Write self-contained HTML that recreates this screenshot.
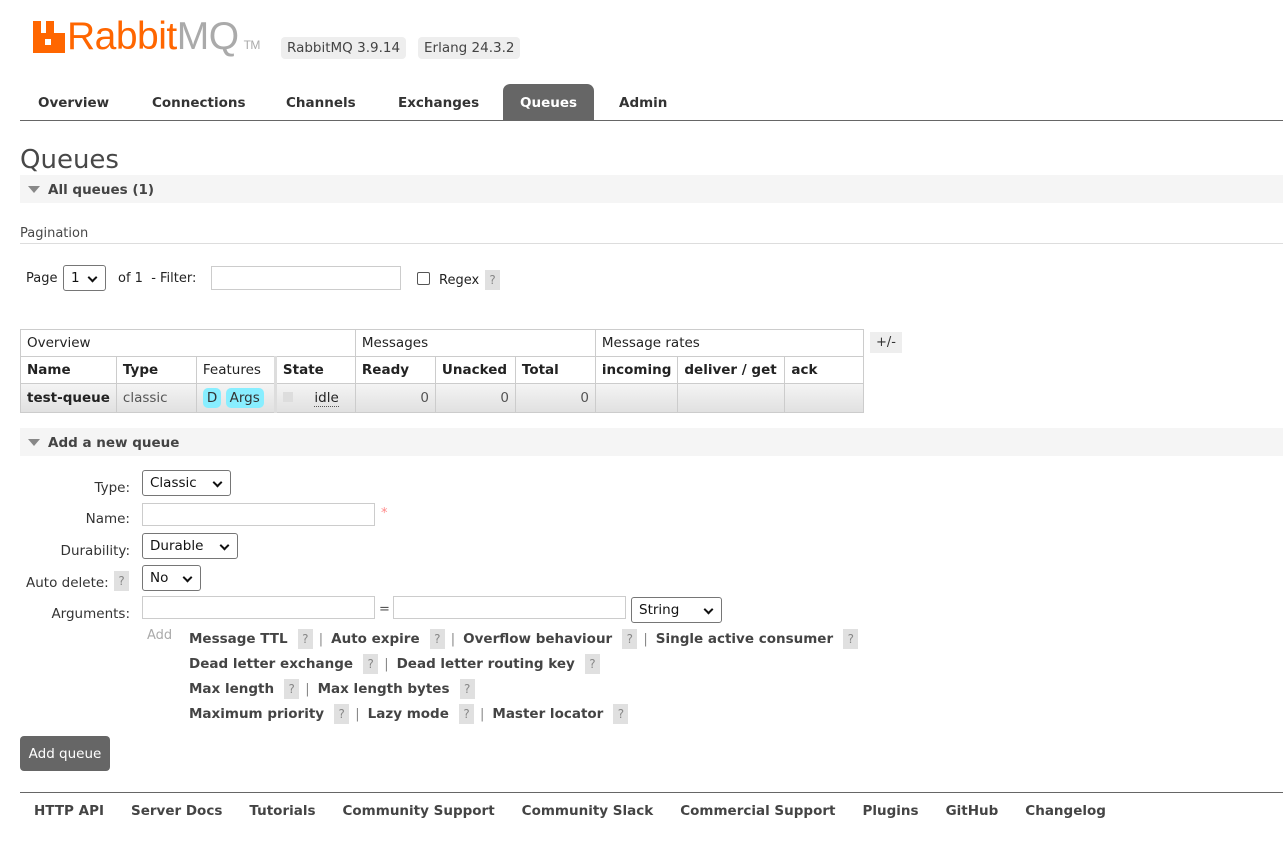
<!DOCTYPE html>
<html><head><meta charset="utf-8"><style>
*{margin:0;padding:0;box-sizing:border-box}
body{width:1283px;height:855px;background:#fff;font-family:"DejaVu Sans","Liberation Sans",sans-serif;font-size:13px;color:#484848;position:relative;overflow:hidden}
.a{position:absolute;white-space:nowrap}
.b{font-weight:bold}
.pill{background:#eee;border-radius:4px;padding:3px 6px;color:#444;font-size:13.5px}
.nav{font-weight:bold;font-size:13.5px;color:#333;top:95px}
.q{background:#e0e0e0;color:#888;width:15px;height:20px;text-align:center;line-height:20px;font-size:12px}
.sel{border:1px solid #767676;border-radius:3px;height:26px;background:#fff;color:#111;padding:4px 7px;font-size:13.5px}
.sel:after{content:"";position:absolute;right:9px;top:8px;width:5px;height:5px;border-right:2px solid #111;border-bottom:2px solid #111;transform:rotate(45deg)}
.inp{border:1px solid #ccc;height:23px;background:#fff}
.lbl{text-align:right;color:#333;font-size:13.5px}
.lnk{font-weight:bold;color:#444;font-size:13.5px}
.sep{color:#888;margin-right:8px;margin-left:2px}
td{border:1px solid #ccc;padding:0 6px;height:27px;font-size:13.5px;color:#222}
.tri{display:inline-block;width:0;height:0;border-left:6px solid transparent;border-right:6px solid transparent;border-top:7px solid #888;margin-right:8px;vertical-align:1px}
.qq{display:inline-block;margin:0 4px 0 6px}
</style></head><body>
<svg class="a" style="left:33px;top:21px" width="32" height="32" viewBox="0 0 32 32"><path d="M0 0h8v12h5V0h8v32H0z M21 12h11v20H21z" fill="#f60"/><rect x="12" y="18" width="6" height="6" fill="#fff"/></svg>
<div class="a" style="left:67px;top:15px;font-family:'Liberation Sans',sans-serif;font-size:39px;color:#f60;letter-spacing:-0.5px">Rabbit<span style="color:#aaa">MQ</span><span style="font-size:12px;color:#aaa;margin-left:5px">TM</span></div>
<div class="a pill" style="left:281px;top:37px">RabbitMQ 3.9.14</div>
<div class="a pill" style="left:418px;top:37px">Erlang 24.3.2</div>
<div class="a nav" style="left:38px">Overview</div>
<div class="a nav" style="left:152px">Connections</div>
<div class="a nav" style="left:286px">Channels</div>
<div class="a nav" style="left:398px">Exchanges</div>
<div class="a" style="left:503px;top:84px;width:91px;height:36px;background:#666;border-radius:7px 7px 0 0"></div>
<div class="a nav" style="left:520px;color:#fff">Queues</div>
<div class="a nav" style="left:619px">Admin</div>
<div class="a" style="left:20px;top:120px;width:1263px;height:1px;background:#666"></div>
<div class="a" style="left:20px;top:145px;font-size:26px;color:#484848">Queues</div>
<div class="a" style="left:20px;top:175px;width:1263px;height:28px;background:#f5f5f5"></div>
<div class="a b" style="left:28px;top:182px;font-size:13.5px;color:#444"><span class="tri"></span>All queues (1)</div>
<div class="a" style="left:20px;top:226px;color:#484848">Pagination</div>
<div class="a" style="left:20px;top:243px;width:1263px;height:1px;background:#ddd"></div>
<div class="a" style="left:26px;top:271px;color:#222">Page</div>
<div class="a sel" style="left:63px;top:265px;width:43px">1</div>
<div class="a" style="left:118px;top:271px;color:#222">of 1 &nbsp;- Filter:</div>
<div class="a inp" style="left:211px;top:266px;width:190px;height:24px"></div>
<div class="a" style="left:417px;top:272px;width:13px;height:13px;border:1px solid #555;border-radius:2px"></div>
<div class="a" style="left:439px;top:273px;color:#222">Regex</div>
<div class="a q" style="left:485px;top:270px">?</div>
<table class="a" style="left:20px;top:329px;border-collapse:collapse;width:844px">
<tr><td colspan="4" style="width:334px">Overview</td><td colspan="3">Messages</td><td colspan="3">Message rates</td></tr>
<tr class="b"><td style="width:95px">Name</td><td style="width:80px">Type</td><td style="width:79px;font-weight:normal">Features</td><td style="width:80px;border-left:3px solid #ddd">State</td><td style="width:80px">Ready</td><td style="width:80px">Unacked</td><td style="width:80px">Total</td><td style="width:82px">incoming</td><td style="width:107px">deliver / get</td><td>ack</td></tr>
<tr style="background:linear-gradient(#f4f4f4,#e0e0e0);height:29px"><td class="b">test-queue</td><td style="color:#555">classic</td><td><span style="background:#8ef;border-radius:5px;padding:2px 4px;color:#333">D</span> <span style="background:#8ef;border-radius:5px;padding:2px 4px;color:#333">Args</span></td><td style="border-left:3px solid #ddd"><span style="display:inline-block;width:10px;height:10px;background:#ddd"></span> &nbsp; &nbsp; <span style="border-bottom:1px dotted #555">idle</span></td><td style="text-align:right;color:#555">0</td><td style="text-align:right;color:#555">0</td><td style="text-align:right;color:#555">0</td><td></td><td></td><td></td></tr>
</table>
<div class="a" style="left:870px;top:332px;width:32px;height:21px;background:#eee;text-align:center;line-height:21px;font-size:13px;color:#333">+/-</div>
<div class="a" style="left:20px;top:428px;width:1263px;height:28px;background:#f5f5f5"></div>
<div class="a b" style="left:28px;top:435px;font-size:13.5px;color:#444"><span class="tri"></span>Add a new queue</div>
<div class="a lbl" style="right:1153px;top:480px">Type:</div>
<div class="a sel" style="left:142px;top:470px;width:89px">Classic</div>
<div class="a lbl" style="right:1153px;top:511px">Name:</div>
<div class="a inp" style="left:142px;top:503px;width:233px"></div>
<div class="a" style="left:381px;top:506px;color:#f88">*</div>
<div class="a lbl" style="right:1153px;top:543px">Durability:</div>
<div class="a sel" style="left:142px;top:533px;width:96px">Durable</div>
<div class="a lbl" style="left:26px;top:575px">Auto delete:</div>
<div class="a q" style="left:114px;top:571px">?</div>
<div class="a sel" style="left:142px;top:565px;width:59px">No</div>
<div class="a lbl" style="right:1153px;top:606px">Arguments:</div>
<div class="a inp" style="left:142px;top:596px;width:233px"></div>
<div class="a" style="left:379px;top:602px;color:#555">=</div>
<div class="a inp" style="left:393px;top:596px;width:233px"></div>
<div class="a sel" style="left:631px;top:597px;width:91px">String</div>
<div class="a" style="left:147px;top:628px;color:#aaa">Add</div>
<div class="a" style="left:189px;top:629px"><span class="lnk">Message TTL</span> <span class="q qq">?</span><span class="sep">|</span><span class="lnk">Auto expire</span> <span class="q qq">?</span><span class="sep">|</span><span class="lnk">Overflow behaviour</span> <span class="q qq">?</span><span class="sep">|</span><span class="lnk">Single active consumer</span> <span class="q qq">?</span></div>
<div class="a" style="left:189px;top:654px"><span class="lnk">Dead letter exchange</span> <span class="q qq">?</span><span class="sep">|</span><span class="lnk">Dead letter routing key</span> <span class="q qq">?</span></div>
<div class="a" style="left:189px;top:679px"><span class="lnk">Max length</span> <span class="q qq">?</span><span class="sep">|</span><span class="lnk">Max length bytes</span> <span class="q qq">?</span></div>
<div class="a" style="left:189px;top:704px"><span class="lnk">Maximum priority</span> <span class="q qq">?</span><span class="sep">|</span><span class="lnk">Lazy mode</span> <span class="q qq">?</span><span class="sep">|</span><span class="lnk">Master locator</span> <span class="q qq">?</span></div>
<div class="a" style="left:20px;top:736px;width:90px;height:35px;background:#666;border-radius:4px;color:#fff;text-align:center;line-height:36px;font-size:13.5px">Add queue</div>
<div class="a" style="left:20px;top:792px;width:1263px;height:1px;background:#666"></div>
<div class="a b" style="left:34px;top:803px;font-size:13.5px;color:#444"><span style="margin-right:27px">HTTP API</span><span style="margin-right:27px">Server Docs</span><span style="margin-right:27px">Tutorials</span><span style="margin-right:27px">Community Support</span><span style="margin-right:27px">Community Slack</span><span style="margin-right:27px">Commercial Support</span><span style="margin-right:27px">Plugins</span><span style="margin-right:27px">GitHub</span><span>Changelog</span></div>
</body></html>
